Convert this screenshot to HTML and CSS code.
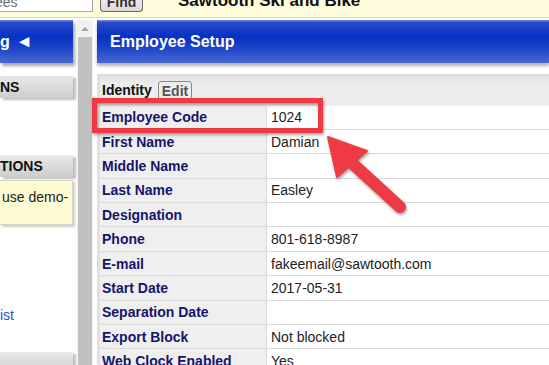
FILE: index.html
```html
<!DOCTYPE html>
<html>
<head>
<meta charset="utf-8">
<link rel="stylesheet" href="styles.css">
</head>
<body>
<div class="page">
  <div class="topbar">
    <div class="search"><span class="search-text">ees</span></div>
    <div class="find">Find</div>
    <div class="company">Sawtooth Ski and Bike</div>
  </div>
  <div class="layout">
    <aside class="side">
      <div class="side-head"><span>g</span><span class="tri">&#9668;</span></div>
      <div class="side-bar first">NS</div>
      <div class="side-bar second">TIONS</div>
      <div class="note">use demo-</div>
      <a class="link">ist</a>
      <div class="side-bar last"></div>
    </aside>
    <div class="scroll">
      <div class="scroll-top"><div class="up"></div></div>
      <div class="thumb"></div>
    </div>
    <main class="main">
      <div class="main-head">Employee Setup</div>
      <section class="identity">
        <div class="id-head"><span class="id-title">Identity</span><span class="edit">Edit</span></div>
        <div class="grid">
          <div class="lbl">Employee Code</div><div class="val">1024</div>
          <div class="lbl">First Name</div><div class="val">Damian</div>
          <div class="lbl">Middle Name</div><div class="val"></div>
          <div class="lbl">Last Name</div><div class="val">Easley</div>
          <div class="lbl">Designation</div><div class="val"></div>
          <div class="lbl">Phone</div><div class="val">801-618-8987</div>
          <div class="lbl">E-mail</div><div class="val">fakeemail@sawtooth.com</div>
          <div class="lbl">Start Date</div><div class="val">2017-05-31</div>
          <div class="lbl">Separation Date</div><div class="val"></div>
          <div class="lbl">Export Block</div><div class="val">Not blocked</div>
          <div class="lbl">Web Clock Enabled</div><div class="val">Yes</div>
        </div>
      </section>
    </main>
  </div>
  <svg class="annot" width="549" height="365" viewBox="0 0 549 365">
    <rect x="94.5" y="100.5" width="226" height="30" fill="none" stroke="#ee3b43" stroke-width="5"/>
    <line x1="352" y1="163" x2="400" y2="207" stroke="#ee3b43" stroke-width="12" stroke-linecap="round"/>
    <polygon points="328,137 337,177 367,151" fill="#ee3b43" stroke="#ee3b43" stroke-width="2" stroke-linejoin="round"/>
  </svg>
</div>
</body>
</html>
```
FILE: styles.css
```css
body {
  margin: 0;
  background: #fff;
  font-family: "Liberation Sans", Arial, sans-serif;
}
.page {
  width: 549px;
  height: 365px;
  overflow: hidden;
  position: relative;
}
.topbar {
  height: 17px;
  background: #fefcdc;
  border-bottom: 1px solid #dcd8bc;
  margin-bottom: 2px;
  display: flex;
  align-items: flex-end;
  overflow: hidden;
}
.search {
  width: 93px;
  height: 24px;
  margin-bottom: 5px;
  box-sizing: border-box;
  background: #fff;
  border-right: 1px solid #a8a8a8;
  border-bottom: 1px solid #a8a8a8;
  font-size: 14px;
  line-height: 14px;
  color: #707070;
  display: flex;
  align-items: flex-end;
  padding-bottom: 2px;
  overflow: hidden;
  flex: none;
}
.search-text { margin-left: -5px; }
.find {
  flex: none;
  margin-left: 7px;
  width: 43px;
  height: 22px;
  margin-bottom: 5px;
  box-sizing: border-box;
  border: 1px solid #666;
  border-top: 0;
  border-radius: 0 0 4px 4px;
  background: linear-gradient(#f8f8f8, #dadada);
  font-weight: bold;
  font-size: 14px;
  line-height: 14px;
  color: #333;
  display: flex;
  align-items: flex-end;
  justify-content: center;
  padding-bottom: 2px;
}
.company {
  margin-left: 35px;
  margin-bottom: 8px;
  font-weight: bold;
  font-size: 17px;
  line-height: 17px;
  color: #111;
  white-space: nowrap;
}
.layout {
  display: flex;
  height: 345px;
}
.side {
  width: 73px;
  flex: none;
  display: flex;
  flex-direction: column;
}
.side > * { flex: none; }
.side-head, .main-head {
  height: 43px;
  flex: none;
  background: linear-gradient(to bottom, #7890e0 0, #2a4bcd 6%, #0431c3 38%, #1a41c8 62%, #4868d3 100%);
  color: #fff;
  font-weight: bold;
  font-size: 16px;
  display: flex;
  align-items: center;
  box-shadow: 2px 3px 3px rgba(0, 0, 0, 0.35);
}
.side-head .tri {
  margin-left: 6px;
  font-size: 17px;
}
.side-bar {
  height: 22px;
  background: linear-gradient(#e9e9e9, #cdcdcd);
  box-shadow: 3px 2px 2px rgba(0, 0, 0, 0.25);
  font-weight: bold;
  font-size: 14px;
  color: #111;
  display: flex;
  align-items: center;
}
.side-bar.first { margin-top: 13px; }
.side-bar.second { margin-top: 57px; }
.side-bar.last { margin-top: 29px; }
.note {
  margin-top: 3px;
  height: 45px;
  box-sizing: border-box;
  background: #fdfbd3;
  border: 1px solid #d8d6c0;
  border-left: 0;
  box-shadow: 2px 2px 2px rgba(0, 0, 0, 0.2);
  font-size: 14px;
  color: #222;
  padding: 8px 0 0 2px;
}
.link {
  margin-top: 82px;
  font-size: 14px;
  line-height: 16px;
  color: #2d4fd6;
}
.scroll {
  width: 16px;
  margin-left: 4px;
  flex: none;
  background: #f1f1f1;
  display: flex;
  flex-direction: column;
  align-items: center;
}
.scroll-top {
  height: 17px;
  flex: none;
  display: flex;
  align-items: center;
  justify-content: center;
}
.up {
  width: 0;
  height: 0;
  border-left: 4px solid transparent;
  border-right: 4px solid transparent;
  border-bottom: 4px solid #a3a3a3;
}
.thumb {
  width: 14px;
  flex: 1;
  background: #c1c1c1;
}
.main {
  margin-left: 4px;
  flex: 1;
  min-width: 0;
}
.main-head {
  padding-left: 13px;
  box-shadow: 0 3px 3px rgba(0, 0, 0, 0.3);
}
.identity {
  margin-top: 11px;
  border-left: 3px solid #e0e0e0;
}
.id-head {
  height: 31.5px;
  box-sizing: border-box;
  background: linear-gradient(#dcdcdc, #ededed 30%, #ececec);
  display: flex;
  align-items: center;
  padding: 1px 0 0 2px;
}
.id-title {
  font-weight: bold;
  font-size: 14px;
  color: #111;
}
.edit {
  margin-left: 6px;
  border: 1px solid #8a8a8a;
  border-radius: 3px;
  padding: 0 3px;
  height: 19px;
  line-height: 18px;
  box-sizing: border-box;
  background: #ededed;
  font-weight: bold;
  font-size: 14px;
  color: #555;
}
.grid {
  display: grid;
  grid-template-columns: 167px 1fr;
  grid-auto-rows: 24.4px;
}
.lbl, .val {
  box-sizing: border-box;
  border-bottom: 1px solid #dadada;
  display: flex;
  align-items: center;
  font-size: 14px;
  white-space: nowrap;
}
.lbl {
  background: #efefef;
  border-right: 1px solid #dadada;
  padding-left: 2px;
  font-weight: bold;
  color: #15156c;
}
.val {
  padding-left: 4px;
  color: #222;
  background: #fff;
}
.annot {
  position: absolute;
  left: 0;
  top: 0;
  pointer-events: none;
  filter: drop-shadow(1px 2px 1.5px rgba(0, 0, 0, 0.35));
}
```
